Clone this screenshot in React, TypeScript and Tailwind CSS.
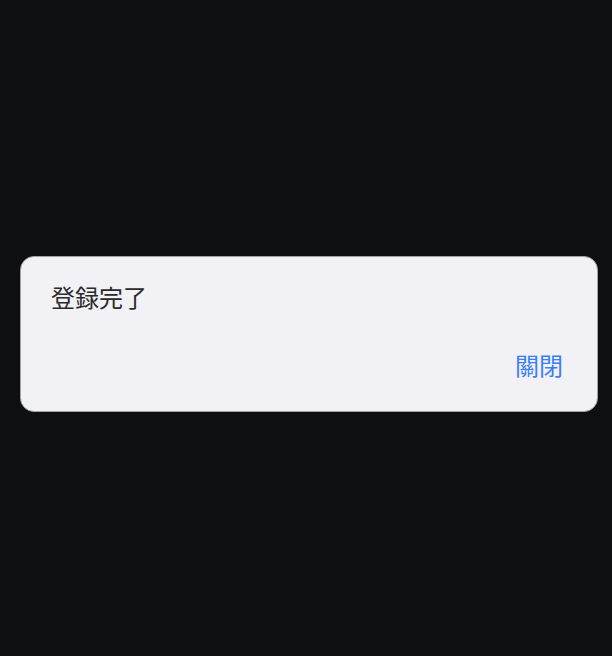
export default function App() {
  return (
    <div
      className="h-[656px] w-[612px] overflow-hidden bg-[#0e0f10] pl-[20px] pr-[14px] pt-[256px]"
      style={{ fontFamily: '"Noto Sans CJK JP", "Noto Sans CJK TC", sans-serif' }}
    >
      <div className="flex h-[156px] flex-col rounded-[14px] border border-[#a2a2a6] bg-[#f1f1f6] pl-[30px] pr-[34px]">
        <p className="pt-[24px] text-[24px] leading-[32px] text-[#2a2a2c]">登録完了</p>
        <div className="mt-auto flex justify-end pb-[30px]">
          <button className="text-[24px] leading-[32px] text-[#3a7ef4]">關閉</button>
        </div>
      </div>
    </div>
  );
}
